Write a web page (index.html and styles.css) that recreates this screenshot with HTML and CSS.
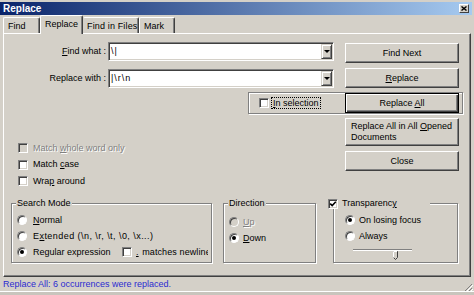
FILE: index.html
```html
<!DOCTYPE html>
<html>
<head>
<meta charset="utf-8">
<title>Replace</title>
<link rel="stylesheet" href="styles.css">
</head>
<body>
<div class="window">
  <div class="titlebar">
    <span class="title">Replace</span>
    <span class="close-btn"><svg width="6" height="5" viewBox="0 0 6 5"><path d="M0.5 0.5 L5.5 4.5 M5.5 0.5 L0.5 4.5" stroke="#000" stroke-width="1.4" fill="none"/></svg></span>
  </div>
  <div class="tabs">
    <div class="tab tab-find">Find</div>
    <div class="tab tab-active">Replace</div>
    <div class="tab tab-files">Find in Files</div>
    <div class="tab tab-mark">Mark</div>
  </div>
  <div class="panel">
    <div class="top">
      <div class="left">
        <div class="field-row">
          <span class="field-label"><u>F</u>ind what :</span>
          <div class="combo"><span class="combo-text">\|</span><span class="drop"><i class="arrow"></i></span></div>
        </div>
        <div class="field-row row-gap">
          <span class="field-label">Replace with :</span>
          <div class="combo"><span class="combo-text">|\r\n</span><span class="drop"><i class="arrow"></i></span></div>
        </div>
        <div class="options">
          <div class="check-row disabled"><span class="box"></span><span>Match <u>w</u>hole word only</span></div>
          <div class="check-row"><span class="box"></span><span>Match <u>c</u>ase</span></div>
          <div class="check-row"><span class="box"></span><span>Wra<u>p</u> around</span></div>
        </div>
      </div>
      <div class="right">
        <div class="btn btn-find">Find Next</div>
        <div class="btn btn-replace"><span><u>R</u>eplace</span></div>
        <div class="sel-group">
          <span class="box"></span><span class="focus-label"><u>I</u>n selection</span>
          <div class="btn btn-default"><span>Replace <u>A</u>ll</span></div>
        </div>
        <div class="btn btn-tall"><span>Replace All in All <u>O</u>pened<br>Documents</span></div>
        <div class="btn btn-close">Close</div>
      </div>
    </div>
    <div class="bottom">
      <div class="group g-search">
        <div class="legend">Search Mode</div>
        <div class="radio-list">
          <div class="radio-row"><span class="radio"></span><span><u>N</u>ormal</span></div>
          <div class="radio-row"><span class="radio"></span><span class="ext">E<u>x</u>tended (\n, \r, \t, \0, \x...)</span></div>
          <div class="radio-row"><span class="radio on"></span><span class="re-label">Re<u>g</u>ular expression</span><span class="box box-nl"></span><span class="clip"><u>.</u> matches newline</span></div>
        </div>
      </div>
      <div class="group g-dir">
        <div class="legend">Direction</div>
        <div class="radio-list">
          <div class="radio-row disabled"><span class="radio"></span><span><u>U</u>p</span></div>
          <div class="radio-row"><span class="radio on"></span><span><u>D</u>own</span></div>
        </div>
      </div>
      <div class="group g-trans">
        <div class="legend"><span class="box box-checked"><svg width="8" height="8" viewBox="0 0 8 8"><path d="M1.2 3.6 L3.2 5.6 L6.8 1.8" stroke="#000" stroke-width="1.6" fill="none"/></svg></span><span>Transparenc<u>y</u></span></div>
        <div class="radio-list">
          <div class="radio-row"><span class="radio on"></span><span>On losing focus</span></div>
          <div class="radio-row"><span class="radio"></span><span>Always</span></div>
        </div>
        <div class="slider">
          <div class="track"></div>
          <svg class="thumb" width="5" height="9" viewBox="0 0 5 9"><path d="M0.5 0.5 H4.5 V6.5 L2.5 8.5 L0.5 6.5 Z" fill="#d4d0c8" stroke="#404040" stroke-width="1"/><path d="M0.5 6.5 V0.5 H4" stroke="#fff" stroke-width="1" fill="none"/></svg>
        </div>
      </div>
    </div>
  </div>
  <div class="status">
    <span>Replace All: 6 occurrences were replaced.</span>
    <svg class="grip" width="12" height="12" viewBox="0 0 12 12"><path d="M11 1 L1 11 M11 5 L5 11 M11 9 L9 11" stroke="#808080" stroke-width="1" fill="none"/><path d="M12 2 L2 12 M12 6 L6 12 M12 10 L10 12" stroke="#fff" stroke-width="1" fill="none"/></svg>
  </div>
  <div class="frame-bottom"></div>
</div>
</body>
</html>
```

FILE: styles.css
```css
* { box-sizing: border-box; }
html, body { margin: 0; padding: 0; }
body {
  width: 474px;
  height: 295px;
  overflow: hidden;
  background: #d4d0c8;
  font-family: "Liberation Sans", Arial, sans-serif;
  font-size: 9px;
  line-height: 11px;
  color: #000;
}
u { text-decoration: underline; text-underline-offset: 1px; }
.window { width: 474px; height: 295px; display: flex; flex-direction: column; }

.titlebar {
  flex: none;
  margin-top: 2px;
  width: 472px;
  height: 13px;
  display: flex;
  align-items: center;
  justify-content: space-between;
  padding: 0 3px;
  background: linear-gradient(to right, #0a246a, #a6caf0);
}
.title { color: #fff; font-weight: bold; font-size: 10px; line-height: 12px; }
.close-btn {
  width: 10px; height: 9px;
  display: flex; align-items: center; justify-content: center;
  background: #d4d0c8;
  border: 1px solid; border-color: #fff #404040 #404040 #fff;
}

.tabs {
  flex: none;
  position: relative;
  z-index: 1;
  height: 18px;
  display: flex;
  align-items: flex-end;
  padding-left: 3px;
}
.tab {
  height: 16px;
  padding: 1px 0 0 4px;
  line-height: 14px;
  white-space: nowrap;
  background: #d4d0c8;
  border-top: 1px solid #fff;
  border-left: 1px solid #fff;
  border-right: 1px solid #404040;
  box-shadow: inset -1px 0 #808080;
  border-top-left-radius: 2px;
  border-top-right-radius: 2px;
}
.tab-find { width: 37px; }
.tab-active { width: 43px; height: 19px; margin-bottom: -1px; padding-top: 1px; }
.tab-files { width: 56px; padding-left: 3px; border-left-color: #d4d0c8; letter-spacing: 0.15px; }
.tab-mark { width: 36px; }

.panel {
  flex: none;
  margin-left: 3px;
  width: 468px;
  height: 244px;
  border: 1px solid;
  border-color: #fff #404040 #404040 #fff;
  box-shadow: inset -1px -1px #808080;
}

.top { display: flex; height: 156px; padding-top: 8px; }
.left { width: 341px; flex: none; }
.field-row { display: flex; align-items: center; height: 19px; }
.row-gap { margin-top: 8px; }
.field-label { width: 104px; padding-right: 2px; text-align: right; flex: none; }
.combo {
  width: 226px; height: 19px;
  display: flex; align-items: center; justify-content: space-between;
  padding: 1px;
  background: #fff;
  border: 1px solid; border-color: #808080 #fff #fff #808080;
  box-shadow: inset 1px 1px #404040, inset -1px -1px #d4d0c8;
}
.combo-text { padding-left: 1px; letter-spacing: 1px; }
.drop {
  width: 11px; height: 15px;
  display: flex; align-items: center; justify-content: center;
  background: #d4d0c8;
  border: 1px solid; border-color: #d4d0c8 #404040 #404040 #d4d0c8;
  box-shadow: inset 1px 1px #fff, inset -1px -1px #808080;
}
.arrow { width: 0; height: 0; border-left: 3px solid transparent; border-right: 3px solid transparent; border-top: 3px solid #000; }

.options { margin-top: 52px; }
.check-row { display: flex; align-items: center; height: 16.5px; padding-left: 14px; }
.box {
  width: 10px; height: 10px; flex: none;
  display: flex; align-items: center; justify-content: center;
  background: #fff;
  border: 1px solid; border-color: #808080 #fff #fff #808080;
  box-shadow: inset 1px 1px #404040, inset -1px -1px #d4d0c8;
  margin-right: 5px;
}
.disabled { color: #808080; text-shadow: 1px 1px 0 #fff; }
.disabled .box, .disabled .radio { background: #d4d0c8; }

.right { width: 114px; flex: none; display: flex; flex-direction: column; }
.btn {
  flex: none;
  height: 20px;
  display: flex; align-items: center; justify-content: center;
  white-space: nowrap;
  background: #d4d0c8;
  border: 1px solid; border-color: #fff #404040 #404040 #fff;
  box-shadow: inset -1px -1px #808080;
}
.btn-find { margin-top: 1px; }
.btn-replace { margin-top: 5px; }
.sel-group {
  flex: none;
  margin-top: 4px;
  margin-left: -97px;
  width: 215px; height: 22px;
  display: flex; align-items: center;
  padding: 0 3px 0 10px;
  border: 1px solid #808080;
  box-shadow: inset 1px 1px #fff, 1px 1px #fff;
}
.sel-group .box { margin-right: 3px; }
.focus-label { outline: 1px dotted #000; padding: 0 1px; line-height: 10px; }
.btn-default {
  margin-left: auto;
  width: 114px;
  border: 1px solid #000;
  box-shadow: inset 1px 1px #fff, inset -1px -1px #404040, inset -2px -2px #808080;
}
.btn-tall { margin-top: 4px; height: 28px; justify-content: flex-start; padding-left: 5px; text-align: left; }
.btn-close { margin-top: 5px; }

.bottom { display: flex; margin-top: 13px; }
.group {
  flex: none;
  height: 60px;
  border: 1px solid #808080;
  box-shadow: inset 1px 1px #fff, 1px 1px #fff;
}
.g-search { margin-left: 7px; width: 201px; }
.g-dir { margin-left: 11px; width: 93px; }
.g-trans { margin-left: 17px; width: 125px; }
.legend {
  display: flex; align-items: center;
  width: max-content;
  height: 11px;
  margin: -6px 0 0 4px;
  padding: 0 1px;
  background: #d4d0c8;
}
.g-trans .legend { width: 102px; margin-left: -6px; padding: 0; }
.g-trans .legend .box { margin-right: 4px; }

.radio-list { margin-top: 3px; padding-left: 5px; }
.radio-row { display: flex; align-items: center; height: 16px; white-space: nowrap; }
.radio {
  position: relative;
  flex: none;
  width: 10px; height: 10px;
  border-radius: 50%;
  background: #fff;
  border: 1px solid; border-color: #808080 #fff #fff #808080;
  box-shadow: inset 1px 1px #404040;
  margin-right: 6px;
}
.radio.on::after {
  content: "";
  position: absolute;
  left: 2px; top: 2px;
  width: 4px; height: 4px;
  border-radius: 50%;
  background: #000;
}
.ext { letter-spacing: 0.45px; }
.re-label { width: 89px; flex: none; }
.box-nl { margin-right: 4px; }
.clip { width: 72px; overflow: hidden; white-space: nowrap; flex: none; letter-spacing: 0.1px; }
.clip u { margin-right: 1px; }

.g-dir .radio-list { margin-top: 5px; }
.g-dir .radio { margin-right: 4px; }
.g-trans .radio-list { padding-left: 11px; }
.g-trans .radio { margin-right: 4px; }

.slider { position: relative; margin: 1px 0 0 19px; width: 59px; height: 12px; }
.track { margin-top: 5px; height: 2px; border-top: 1px solid #808080; border-bottom: 1px solid #fff; }
.thumb { position: absolute; left: 40px; top: 2px; }

.status {
  flex: none;
  height: 14px;
  display: flex; align-items: center; justify-content: space-between;
  padding-left: 3px;
  color: #2b2bd1;
}
.grip { align-self: flex-end; margin-bottom: -4px; margin-right: 1px; }
.frame-bottom { flex: none; height: 4px; border-top: 1px solid #fff; background: #c9c5bd; }
```
